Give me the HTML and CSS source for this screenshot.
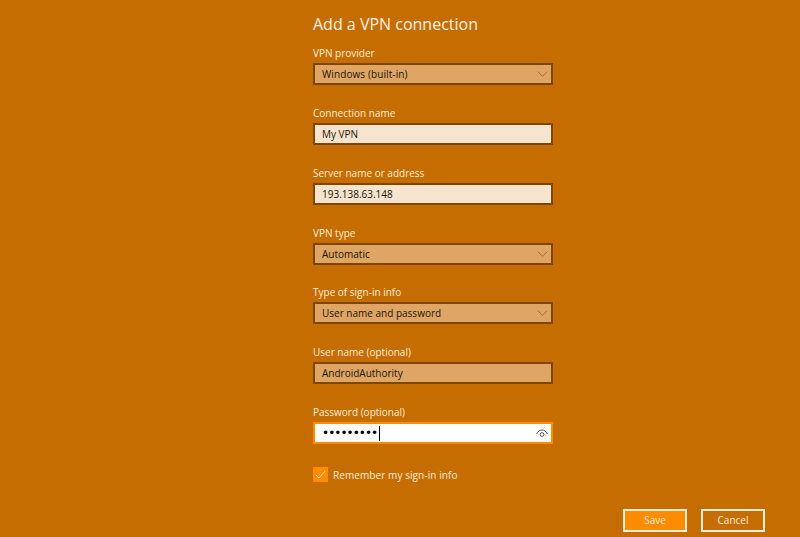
FILE: index.html
```html
<!DOCTYPE html>
<html lang="en">
<head>
<meta charset="utf-8">
<title>Add a VPN connection</title>
<link rel="stylesheet" href="styles.css">
</head>
<body>
<main class="page">
  <h1 class="title">Add a VPN connection</h1>
  <div class="group">
    <div class="label">VPN provider</div>
    <div class="field select"><span class="wide">Windows (built-in)</span><svg class="chev" viewBox="0 0 12 7"><path d="M.5.7 6 6.2 11.5.7"/></svg></div>
  </div>
  <div class="group">
    <div class="label">Connection name</div>
    <div class="field input"><span>My VPN</span></div>
  </div>
  <div class="group">
    <div class="label">Server name or address</div>
    <div class="field input"><span>193.138.63.148</span></div>
  </div>
  <div class="group">
    <div class="label">VPN type</div>
    <div class="field select"><span>Automatic</span><svg class="chev" viewBox="0 0 12 7"><path d="M.5.7 6 6.2 11.5.7"/></svg></div>
  </div>
  <div class="group">
    <div class="label">Type of sign-in info</div>
    <div class="field select"><span>User name and password</span><svg class="chev" viewBox="0 0 12 7"><path d="M.5.7 6 6.2 11.5.7"/></svg></div>
  </div>
  <div class="group">
    <div class="label">User name (optional)</div>
    <div class="field select"><span>AndroidAuthority</span></div>
  </div>
  <div class="group">
    <div class="label">Password (optional)</div>
    <div class="field focus">
      <span class="dots">•••••••••</span><span class="caret"></span>
      <svg class="eye" viewBox="0 0 12 9"><path d="M.6 5C2 2.200 3.800 1 6 1s4 1.200 5.400 4"/><circle cx="6" cy="5.500" r="1.900"/></svg>
    </div>
  </div>
  <div class="check-row">
    <span class="check"><svg viewBox="0 0 14 11"><path d="M1 6l4 4 8-9"/></svg></span>
    <span class="check-label">Remember my sign-in info</span>
  </div>
  <div class="actions">
    <div class="btn primary">Save</div>
    <div class="btn">Cancel</div>
  </div>
</main>
</body>
</html>
```
FILE: styles.css
```css
html, body {
  margin: 0;
  padding: 0;
  height: 100%;
  background: #c56d00;
  overflow: hidden;
}
.page {
  box-sizing: border-box;
  width: 800px;
  height: 537px;
  padding: 12px 0 0 313px;
  font-family: "Open Sans", "Noto Sans", sans-serif;
  font-size: 10px;
  color: #fdeeda;
  display: flex;
  flex-direction: column;
}
.title {
  margin: 0 0 10px;
  font-size: 16px;
  font-weight: 400;
  line-height: 24px;
  color: #fdf1e0;
}
.group {
  width: 240px;
  height: 59.85px;
  flex: none;
}
.label {
  height: 17px;
  line-height: 14px;
}
.field {
  box-sizing: border-box;
  height: 22px;
  border: 2px solid #7e4600;
  display: flex;
  align-items: center;
  padding: 0 3px 0 7px;
  color: #201505;
}
.wide { letter-spacing: .1px; }
.select { background: #dfa565; }
.input { background: #f6e4ce; }
.focus {
  background: #fff;
  border-color: #ff8c00;
  color: #000;
}
.dots {
  font-family: "DejaVu Sans", sans-serif;
  font-size: 12px;
  letter-spacing: -.95px;
}
.caret {
  width: 1px;
  height: 15px;
  background: #000;
  margin-left: 2px;
}
.chev {
  width: 11px;
  height: 6px;
  margin-left: auto;
  fill: none;
  stroke: #9c6520;
  stroke-width: 1;
}
.eye {
  width: 12px;
  height: 9px;
  margin-left: auto;
  fill: none;
  stroke: #555;
  stroke-width: 1;
}
.check-row {
  display: flex;
  align-items: center;
  gap: 5px;
  margin-top: 2px;
  height: 16px;
}
.check {
  width: 15px;
  height: 15px;
  background: #ff8c00;
  display: flex;
  align-items: center;
  justify-content: center;
}
.check svg {
  width: 11px;
  height: 9px;
  fill: none;
  stroke: #fdeeda;
  stroke-width: 1.2;
}
.check-label { letter-spacing: .08px; }
.actions {
  display: flex;
  gap: 14px;
  margin: 26px 0 0 310px;
}
.btn {
  box-sizing: border-box;
  width: 64px;
  height: 23px;
  border: 2px solid #fdeeda;
  display: flex;
  align-items: center;
  justify-content: center;
}
.primary { background: #ff8c00; }
```
